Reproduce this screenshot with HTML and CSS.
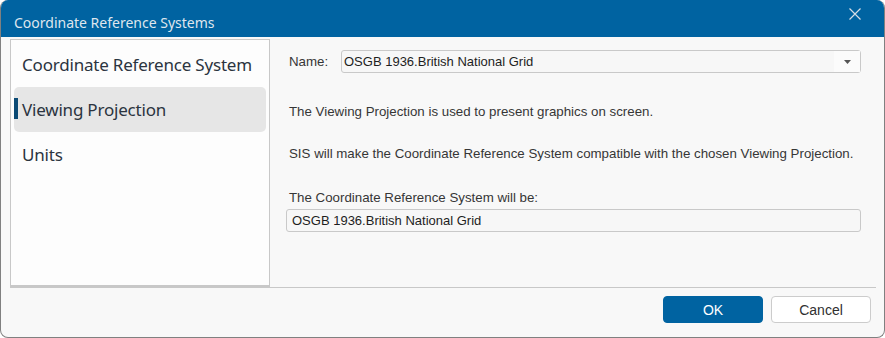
FILE: index.html
```html
<!DOCTYPE html>
<html>
<head>
<meta charset="utf-8">
<link rel="stylesheet" href="styles.css">
</head>
<body>
<div class="window">
  <div class="titlebar">
    <span class="title">Coordinate Reference Systems</span>
    <svg class="close" width="12" height="12" viewBox="0 0 12 12"><path d="M0.5 0.5 L11.5 11.5 M11.5 0.5 L0.5 11.5" stroke="#d6dde5" stroke-width="1.2" fill="none"/></svg>
  </div>
  <div class="main">
    <div class="sidebar">
      <div class="item">Coordinate Reference System</div>
      <div class="item selected"><span class="accent"></span>Viewing Projection</div>
      <div class="item">Units</div>
    </div>
    <div class="content">
      <div class="name-row">
        <span class="label">Name:</span>
        <div class="combo"><span class="combo-text">OSGB 1936.British National Grid</span><span class="combo-btn"><svg width="7" height="4" viewBox="0 0 7 4"><path d="M0 0 H7 L3.5 4 Z" fill="#555"/></svg></span></div>
      </div>
      <p class="desc first">The Viewing Projection is used to present graphics on screen.</p>
      <p class="desc">SIS will make the Coordinate Reference System compatible with the chosen Viewing Projection.</p>
      <p class="desc small">The Coordinate Reference System will be:</p>
      <div class="textbox">OSGB 1936.British National Grid</div>
    </div>
  </div>
  <div class="footer">
    <button class="btn ok">OK</button>
    <button class="btn cancel">Cancel</button>
  </div>
</div>
</body>
</html>
```
FILE: styles.css
```css
html, body {
  margin: 0;
  padding: 0;
  background: #ffffff;
}
.window {
  width: 885px;
  height: 338px;
  box-sizing: border-box;
  border: 1px solid #808080;
  border-top: none;
  border-radius: 8px;
  overflow: hidden;
  background: #f8f8f8;
  display: flex;
  flex-direction: column;
}
.titlebar {
  height: 37px;
  flex: none;
  background: #0063a1;
  display: flex;
  align-items: center;
  justify-content: space-between;
  padding: 0 23px 0 13px;
  box-sizing: border-box;
}
.title {
  font-family: "Noto Sans", "Open Sans", sans-serif;
  font-size: 14px;
  color: #dfe6ee;
  padding-top: 7px;
}
.close {
  margin-top: -10px;
}
.main {
  display: flex;
  margin: 2px 8px 0 9px;
  height: 248px;
  border-bottom: 1px solid #c8c8c8;
}
.sidebar {
  width: 260px;
  flex: none;
  box-sizing: border-box;
  background: #fdfdfd;
  border: 1px solid #c8c8c8;
  border-bottom-width: 2px;
  padding: 2px 3px;
}
.item {
  position: relative;
  height: 45px;
  display: flex;
  align-items: center;
  padding-left: 8px;
  font-family: "Noto Sans", "Open Sans", sans-serif;
  font-size: 17px;
  letter-spacing: -0.2px;
  color: #2b3440;
  border-radius: 5px;
}
.item.selected {
  background: #e6e6e6;
}
.accent {
  position: absolute;
  left: 0;
  top: 11px;
  width: 4px;
  height: 21px;
  background: #0b4a75;
}
.content {
  flex: 1;
  padding: 11px 15px 0 16px;
  font-family: "Liberation Sans", Arial, sans-serif;
  font-size: 13.3px;
  color: #363636;
}
.name-row {
  display: flex;
  align-items: center;
  padding-left: 3px;
}
.label {
  width: 52px;
}
.combo {
  flex: 1;
  height: 23px;
  box-sizing: border-box;
  border: 1px solid #c9c9c9;
  border-radius: 3px;
  background: #f7f7f7;
  display: flex;
  align-items: center;
}
.combo-text {
  flex: 1;
  padding-left: 2px;
  font-size: 13px;
  color: #1e1e1e;
}
.combo-btn {
  width: 26px;
  height: 21px;
  background: #fbfbfb;
  display: flex;
  align-items: center;
  justify-content: center;
}
.desc {
  margin: 0;
  padding-left: 3px;
  line-height: 15px;
}
.desc.first {
  margin-top: 31px;
}
.desc + .desc {
  margin-top: 27px;
}
.desc.small {
  margin-top: 29px;
}
.textbox {
  margin-top: 4px;
  height: 23px;
  box-sizing: border-box;
  border: 1px solid #c9c9c9;
  border-radius: 3px;
  background: #f7f7f7;
  padding-left: 5px;
  line-height: 21px;
  font-size: 13px;
  color: #1e1e1e;
}
.footer {
  display: flex;
  justify-content: flex-end;
  gap: 8px;
  padding: 8px 13px 0 0;
}
.btn {
  width: 100px;
  height: 27px;
  border-radius: 4px;
  font-family: "Liberation Sans", Arial, sans-serif;
  font-size: 14px;
  cursor: default;
}
.ok {
  background: #0063a1;
  color: #ffffff;
  border: 1px solid #0063a1;
}
.cancel {
  background: #ffffff;
  color: #303030;
  border: 1px solid #cccccc;
}
```
